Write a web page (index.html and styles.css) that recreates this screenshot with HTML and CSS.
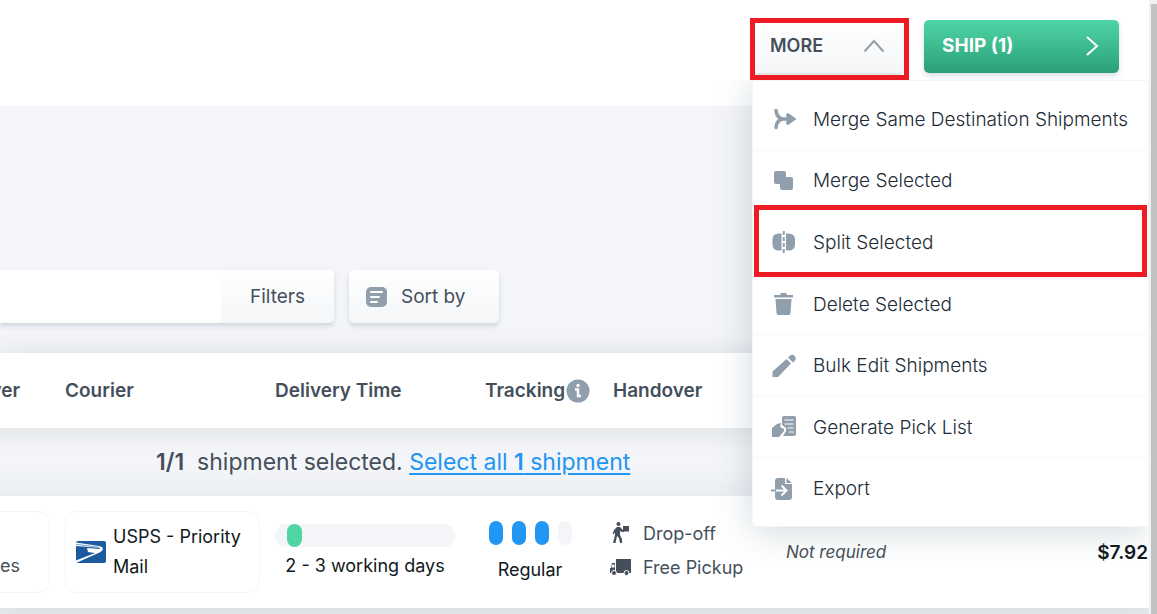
FILE: index.html
```html
<!DOCTYPE html>
<html lang="en">
<head>
    <meta charset="UTF-8">
    <meta name="viewport" content="width=device-width, initial-scale=1.0">
    <title>Shipments</title>
    <link rel="stylesheet" href="styles.css">
</head>
<body>
    <div class="page">
        <header class="header">
            <div class="more">
                <button type="button" class="btn more-btn">MORE
                    <svg width="22" height="14" viewBox="0 0 22 14"><path d="M1.500 12.500L11 2l9.500 10.500" fill="none" stroke="#919eab" stroke-width="2"/></svg>
                </button>
            </div>
            <button type="button" class="btn ship-btn">SHIP (1)
                <svg width="14" height="22" viewBox="0 0 14 22"><path d="M2 2l10 9L2 20" fill="none" stroke="#fff" stroke-width="2"/></svg>
            </button>
            <nav class="menu">
                <a href="#">
                    <svg class="icon" viewBox="0 0 24 24"><path d="M4 3.500c.5 5 3 8.500 8 8.500M4 20.500c.5-5 3-8.500 8-8.500h6" fill="none" stroke="#919eab" stroke-width="3.500" stroke-linecap="round"/><path d="M16 7l7 5-7 5-1-1 1-4-1-4z" fill="#919eab" stroke="#919eab" stroke-width="2" stroke-linejoin="round"/></svg>
                    Merge Same Destination Shipments
                </a>
                <a href="#">
                    <svg class="icon" viewBox="0 0 24 24"><path d="M4 2h8q2 0 2 2v4h5q2 0 2 2v9q0 2-2 2h-9q-2 0-2-2v-4H4q-2 0-2-2V4q0-2 2-2z"/></svg>
                    Merge Selected
                </a>
                <a href="#" class="marked">
                    <svg class="icon" viewBox="0 0 24 24"><path d="M9.500 3.500v17H7q-6.500 0-6.500-6v-5q0-6 6.500-6zM14 3.500v17h2.500q6.500 0 6.500-6v-5q0-6-6.500-6z"/><path d="M11.750 1v22" stroke="#919eab" stroke-width="2" stroke-dasharray="4 2"/></svg>
                    Split Selected
                </a>
                <a href="#">
                    <svg class="icon" viewBox="0 0 24 24"><path d="M2 3h6l1-2h5l1 2h6v2.500H2zM3.500 7h16l-1 14q0 2-2 2h-10q-2 0-2-2z"/></svg>
                    Delete Selected
                </a>
                <a href="#">
                    <svg class="icon" viewBox="0 0 24 24"><path d="M14.500 5l4.500 4.500L6 23H.500v-5.500zM16 3.500l1.500-1.500q3-2.500 5 0 2.500 2.500 0 5L21 8.500z"/></svg>
                    Bulk Edit Shipments
                </a>
                <a href="#">
                    <svg class="icon" viewBox="0 0 24 24"><path d="M12 1h10q2 0 2 2v16q0 2-2 2H11l3-5v-3l-4-3V3q0-2 2-2z"/><path d="M0 22v-9l5-4 4-1-1 4 4 2v2l-5 6z"/><path d="M12.500 5h9M12.500 9h9M15.500 13h6M17 17h5" stroke="#fff" stroke-width="1.200"/></svg>
                    Generate Pick List
                </a>
                <a href="#">
                    <svg class="icon" viewBox="0 0 24 24"><path d="M6 1h7v6h7v13q0 3-3 3H6q-3 0-3-3V4q0-3 3-3zM14.500 1l5.500 5h-5.500z"/><path d="M3 13.500h11M9.500 8.500l5 5-5 5" fill="none" stroke="#fff" stroke-width="2"/><path d="M-1 13.500h5" stroke="#919eab" stroke-width="2"/></svg>
                    Export
                </a>
            </nav>
        </header>

        <div class="toolbar">
            <div class="search">
                <input type="text" aria-label="Search shipments">
                <button type="button" class="btn">Filters</button>
            </div>
            <button type="button" class="btn sort-btn">
                <svg width="21" height="20" viewBox="0 0 21 20"><rect width="21" height="20" rx="5" fill="#919eab"/><path d="M5 5h11M5 10h8M5 15h6" stroke="#fff" stroke-width="2" stroke-linecap="round"/></svg>
                Sort by
            </button>
        </div>

        <table class="shipments">
            <colgroup>
                <col class="col-receiver"><col class="col-wide"><col class="col-wide"><col class="col-tracking"><col class="col-handover"><col><col>
            </colgroup>
            <thead>
                <tr>
                    <th><div class="clip">ver</div></th>
                    <th>Courier</th>
                    <th>Delivery Time</th>
                    <th>
                        <div class="tracking">Tracking
                            <svg width="24" height="24" viewBox="0 0 24 24"><circle cx="12" cy="12" r="11.500" fill="#919eab"/><circle cx="12" cy="6.500" r="1.700" fill="#fff"/><path d="M9 10.500h3v6.500h3" fill="none" stroke="#fff" stroke-width="2.400"/></svg>
                        </div>
                    </th>
                    <th>Handover</th>
                    <th></th>
                    <th></th>
                </tr>
            </thead>
            <tbody>
                <tr class="selection">
                    <td colspan="7"><b>1/1</b> &nbsp;shipment selected. <a href="#">Select all <b>1</b> shipment</a></td>
                </tr>
                <tr class="shipment">
                    <td><div class="card receiver">es</div></td>
                    <td>
                        <div class="card courier">
                            <svg width="30" height="22" viewBox="0 0 30 22"><rect width="30" height="22" rx="2" fill="#1c5aa0"/><path d="M0 1.500l23 3.500q5 1 3.500 4-1 2-4 3L0 22v-2.500L19 12l-7-1-1-4 13 1q1-1-2-1.200L0 5z" fill="#fff"/><path d="M0 3.300l23 3" stroke="#1c5aa0" stroke-width=".6"/></svg>
                            <span>USPS - Priority Mail</span>
                        </div>
                    </td>
                    <td class="raised">
                        <div class="delivery">
                            <div class="track"><span></span></div>
                            2 - 3 working days
                        </div>
                    </td>
                    <td class="raised">
                        <div class="tracking-level">
                            <div class="pills"><span></span><span></span><span></span><span class="off"></span></div>
                            Regular
                        </div>
                    </td>
                    <td class="raised">
                        <div class="handover">
                            <svg width="24" height="24" viewBox="0 0 24 24"><circle cx="9.500" cy="3" r="2" fill="#454f5b"/><path d="M8 6h3l3 3 1 2h-2l-2-1v4l2 4v4h-2l-1-5-2-2-1.500 7H4L6 14v-3l-1 2H3.500L5 9z" fill="#454f5b"/><path d="M14 5h6v5.500h-6z" fill="#454f5b"/></svg>
                            Drop-off
                        </div>
                        <div class="handover">
                            <svg width="24" height="24" viewBox="0 0 24 24"><path d="M7 4h15v14H7zM3 8h3v10H1v-5h1z" fill="#454f5b"/><path d="M3.500 9.500H5.500v3H2.500z" fill="#fff"/><circle cx="5" cy="18" r="2.500" fill="#454f5b" stroke="#fff"/><circle cx="17.500" cy="18" r="2.500" fill="#454f5b" stroke="#fff"/></svg>
                            Free Pickup
                        </div>
                    </td>
                    <td class="insurance">Not required</td>
                    <td class="price">$7.92</td>
                </tr>
            </tbody>
        </table>
    </div>
    <div class="scrollbar"></div>
</body>
</html>
```
FILE: styles.css
```css
* {
    box-sizing: border-box;
}
body {
    margin: 0;
    display: flex;
    min-height: 100vh;
    font-family: Inter, "Liberation Sans", sans-serif;
    font-size: 18px;
    color: #454f5b;
    background: #e8ecef;
}
.page {
    flex: 1;
    min-width: 0;
}
.scrollbar {
    width: 8px;
    background: #c1c1c1;
    border-top: 4px solid #f1f1f1;
    border-left: 2px solid #f1f1f1;
}
.btn {
    display: flex;
    align-items: center;
    height: 53px;
    border: none;
    border-radius: 5px;
    font: inherit;
    font-size: 19px;
    color: #454f5b;
    background: linear-gradient(#fff, #f4f6f8);
    box-shadow: 0 3px 5px rgba(60, 90, 110, 0.2);
    cursor: pointer;
}

/* header and menu */
.header {
    position: relative;
    display: flex;
    justify-content: flex-end;
    align-items: flex-start;
    gap: 22px;
    height: 106px;
    padding: 20px 30px 0 0;
    background: #fff;
}
.more {
    position: relative;
}
.more::after {
    content: "";
    position: absolute;
    inset: -2px -7px -7px -3px;
    border: 5px solid #ed1c24;
    pointer-events: none;
    z-index: 3;
}
.more-btn, .ship-btn {
    justify-content: space-between;
}
.more-btn {
    width: 149px;
    padding: 0 17px 2px;
    font-size: 18px;
    font-weight: 600;
}
.ship-btn {
    width: 195px;
    padding: 0 20px 2px 18px;
    font-weight: 700;
    color: #fff;
    background: linear-gradient(#50d5a5, #2a9f7a);
}
.menu {
    position: absolute;
    top: 80px;
    right: 0;
    width: 397px;
    min-height: 447px;
    padding: 8px 0 7px;
    display: flex;
    flex-direction: column;
    background: #fff;
    border: 1px solid #f3f5f7;
    border-radius: 4px 0 0 4px;
    box-shadow: 0 4px 36px rgba(60, 90, 110, 0.24);
    clip-path: inset(0 0 -60px -60px);
    z-index: 2;
}
.menu a {
    position: relative;
    flex: 1;
    display: flex;
    align-items: center;
    gap: 17px;
    padding-left: 19px;
    color: #212b36;
    font-size: 19px;
    font-weight: 300;
    text-decoration: none;
    white-space: nowrap;
    border-bottom: 1px solid #f6f7f9;
}
.menu a:last-child {
    border-bottom: none;
}
.marked::after {
    content: "";
    position: absolute;
    inset: -7px 1px -4px 1px;
    border: 5px solid #ed1c24;
}
.icon {
    width: 24px;
    height: 24px;
    fill: #919eab;
    overflow: visible;
}

/* toolbar */
.toolbar {
    display: flex;
    gap: 15px;
    height: 247px;
    padding-top: 164px;
    background: #f4f5f8;
}
.search {
    display: flex;
    height: 53px;
    border-radius: 0 5px 5px 0;
    box-shadow: 0 3px 5px rgba(60, 90, 110, 0.2);
}
.search input {
    width: 221px;
    border: none;
    background: #fff;
    font: inherit;
}
.search .btn {
    width: 113px;
    justify-content: center;
    border-radius: 0 5px 5px 0;
    box-shadow: none;
}
.sort-btn {
    width: 150px;
    padding-left: 17px;
    gap: 14px;
}

/* table */
.shipments {
    width: 100%;
    table-layout: fixed;
    border-collapse: collapse;
    background: #fff;
    box-shadow: 0 0 24px rgba(60, 90, 110, 0.14);
}
.col-receiver {
    width: 65px;
}
.col-wide {
    width: 210px;
}
.col-tracking {
    width: 128px;
}
.col-handover {
    width: 173px;
}
th, td {
    padding: 0;
    text-align: left;
}
th {
    height: 75px;
    font-size: 19px;
    font-weight: 600;
    white-space: nowrap;
}
.clip {
    display: flex;
    justify-content: flex-end;
    width: 20px;
}
.tracking {
    display: flex;
    align-items: center;
    gap: 1px;
}
.selection td {
    height: 68px;
    padding-left: 156px;
    font-size: 23px;
    background: linear-gradient(#e6eaed, #f4f5f8 35%, #f4f5f8 60%, #e9edf1);
}
.selection a {
    color: #2196f3;
    text-underline-offset: 3px;
}
.selection b {
    font-weight: 600;
}
.shipment {
    height: 112px;
    color: #111820;
}
.card {
    display: flex;
    align-items: center;
    height: 82px;
    border: 1px solid #f4f5f7;
    border-radius: 12px;
}
.receiver {
    width: 50px;
    padding-top: 26px;
    border-left: none;
    border-radius: 0 12px 12px 0;
    color: #454f5b;
}
.courier {
    width: 195px;
    gap: 7px;
    padding-left: 10px;
    line-height: 30px;
}
.courier svg {
    flex: none;
}
.raised {
    padding-bottom: 4px;
}
.delivery {
    width: 180px;
    text-align: center;
    white-space: nowrap;
}
.track {
    height: 23px;
    margin-bottom: 8px;
    padding-left: 12px;
    border-radius: 12px;
    background: #f4f5f8;
}
.track span {
    display: block;
    width: 15px;
    height: 23px;
    border-radius: 8px;
    background: #50d5a5;
}
.tracking-level {
    width: 90px;
    text-align: center;
}
.pills {
    display: flex;
    justify-content: center;
    gap: 9px;
    margin-bottom: 14px;
}
.pills span {
    width: 14px;
    height: 24px;
    border-radius: 7px;
    background: #2196f3;
}
.pills .off {
    background: #f4f5f8;
}
.handover {
    display: flex;
    align-items: center;
    gap: 10px;
    height: 34px;
    margin-left: -4px;
    color: #454f5b;
}
.insurance {
    font-size: 17px;
    font-style: italic;
    color: #454f5b;
}
.price {
    padding-right: 1px;
    text-align: right;
    font-size: 19px;
    font-weight: 600;
}
```
